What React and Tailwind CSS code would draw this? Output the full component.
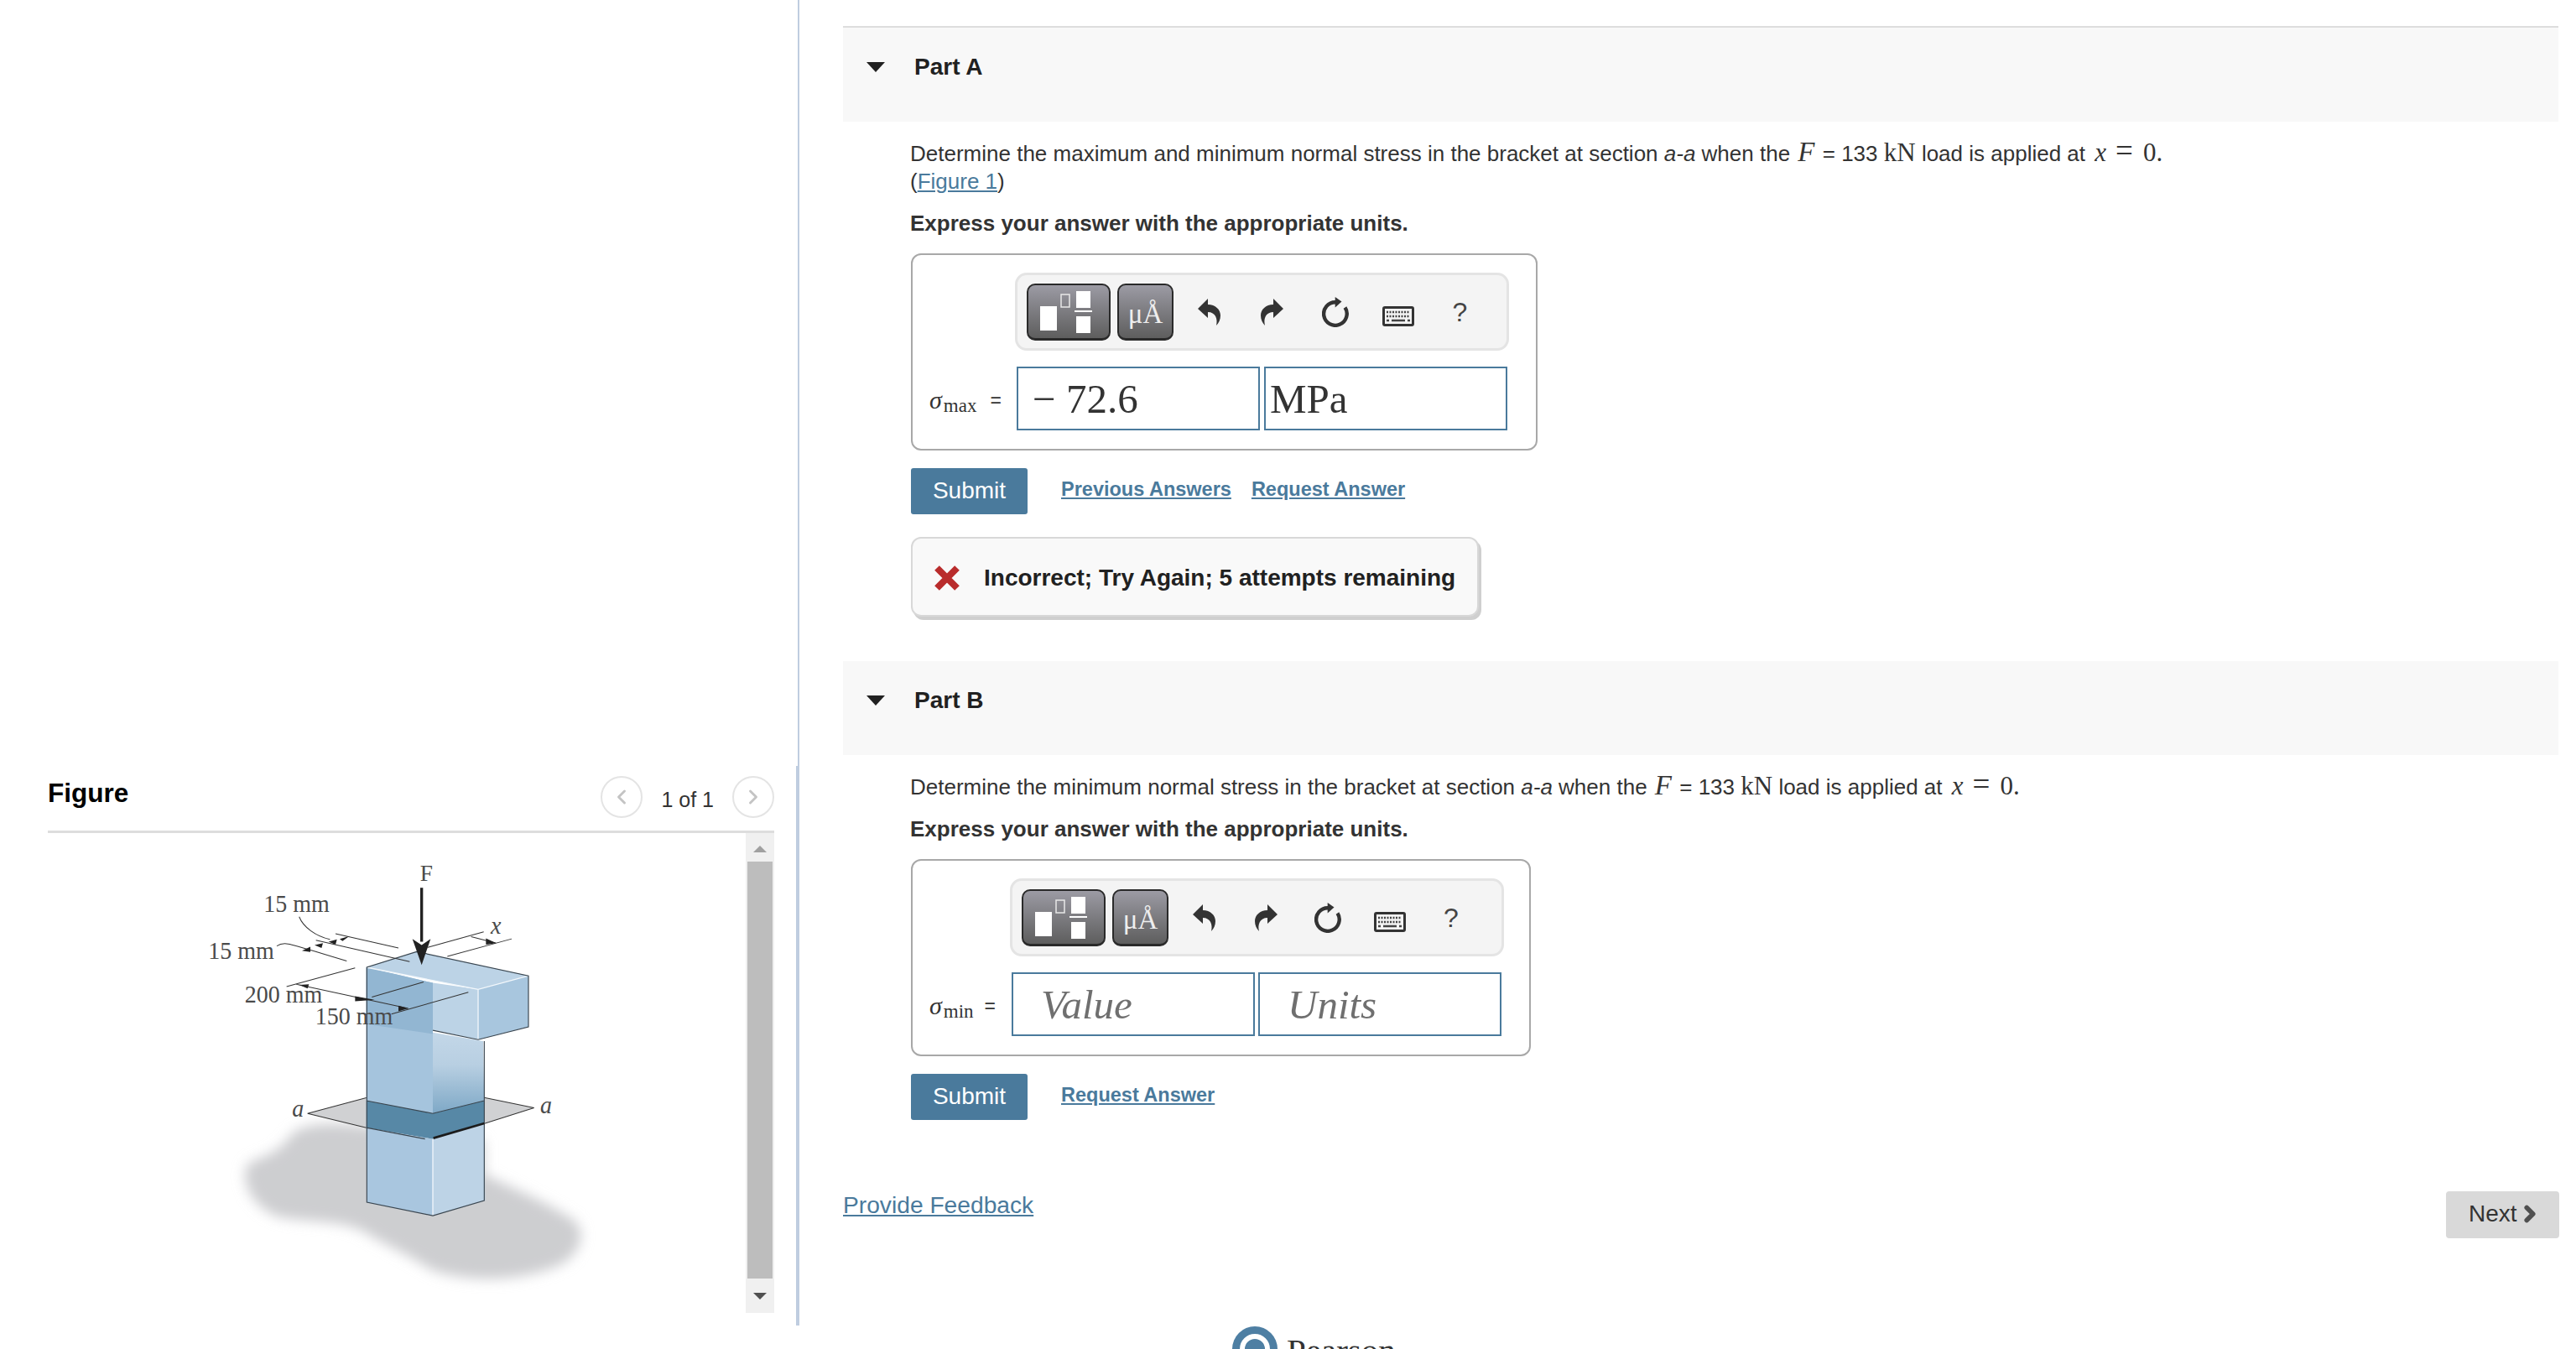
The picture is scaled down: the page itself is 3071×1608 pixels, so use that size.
import React from 'react';
import { ChevronLeft, ChevronRight } from 'lucide-react';

function Undo({ flip }) {
    return (
        <svg width="27" height="32" viewBox="0 0 27 32" className={flip ? '-scale-x-100' : ''}>
            <path d="M0 12 L12 0 L12 7 C21 7 27 13 27 20 C27 25 25 29 22 32 C24 24 21 16 12 16 L12 23 Z" fill="#333" />
        </svg>
    );
}

function Reset() {
    return (
        <svg width="32" height="36" viewBox="0 0 32 36">
            <path d="M16 6.2 A13.8 13.8 0 1 0 27.5 12.5" fill="none" stroke="#333" strokeWidth="4.4" />
            <path d="M15.7 0 L23.5 5.5 L15.7 12.5 Z" fill="#333" />
        </svg>
    );
}

function Keyboard() {
    return (
        <svg width="38" height="24" viewBox="0 0 38 24">
            <rect x="1.5" y="1.5" width="35" height="21" rx="1.5" fill="#f4f4f4" stroke="#333" strokeWidth="3" />
            <path d="M5 7 H33" stroke="#444" strokeWidth="2.5" strokeDasharray="2 1.5" />
            <path d="M5 12 H33" stroke="#444" strokeWidth="2.5" strokeDasharray="2 1.5" />
            <path d="M5 17 H8 M11 17 H27 M30 17 H33" stroke="#444" strokeWidth="2.5" />
        </svg>
    );
}

function Triangle() {
    return (
        <svg width="22" height="12" viewBox="0 0 22 12" className="mt-[9px]">
            <path d="M0 0 H22 L11 12 Z" fill="#212121" />
        </svg>
    );
}

function PartHeader({ name, heightClass, topBorder }) {
    return (
        <div className={`flex bg-[#f8f8f8] pl-[28px] pt-[32px] ${heightClass} ${topBorder ? 'border-t-2 border-[#dddddd]' : ''}`}>
            <Triangle />
            <span className="ml-[35px] text-[28px] leading-[30px] font-bold text-[#212121]">{name}</span>
        </div>
    );
}

function Toolbar({ marginClass, cellClass }) {
    return (
        <div className={`flex items-center w-[589px] h-[93px] bg-[#f4f4f4] border-[3px] border-[#e4e4e4] rounded-[14px] pl-[11px] ${marginClass}`}>
            <div className="w-[100px] h-[68px] rounded-[10px] border-2 border-b-[3px] border-[#2a2a2a] bg-gradient-to-b from-[#9c9ba4] to-[#5e5e5e] shrink-0">
                <svg width="96" height="63" viewBox="0 0 96 63">
                    <rect x="14" y="25" width="20" height="29" fill="#fff" />
                    <rect x="39" y="11" width="10" height="15" fill="none" stroke="#e8e8e8" strokeWidth="1.5" />
                    <rect x="57" y="7" width="17" height="20" fill="#fff" />
                    <rect x="55" y="30" width="21" height="2" fill="#fff" />
                    <rect x="57" y="37" width="17" height="20" fill="#fff" />
                </svg>
            </div>
            <div className="ml-[8px] w-[67px] h-[68px] rounded-[10px] border-2 border-b-[3px] border-[#2a2a2a] bg-gradient-to-b from-[#9c9ba4] to-[#5e5e5e] shrink-0 flex items-center justify-center pt-[8px] font-['Liberation_Serif',serif] text-[33px] text-[#eeeeee]">
                μÅ
            </div>
            <div className={`ml-[5px] flex justify-center ${cellClass}`}><Undo /></div>
            <div className={`flex justify-center ${cellClass}`}><Undo flip /></div>
            <div className={`flex justify-center ${cellClass}`}><Reset /></div>
            <div className={`flex justify-center pt-[10px] ${cellClass}`}><Keyboard /></div>
            <div className={`flex justify-center text-[32px] leading-none text-[#444444] -ml-[1px] ${cellClass}`}>?</div>
        </div>
    );
}

function Answer({ sub, widthClass, marginClass, labelClass, cellClass, gapClass, eqClass, value, units }) {
    const placeholder = 'italic text-[#6f6f6f] pl-[33px]';
    return (
        <div className={`${widthClass} border-2 border-[#a8a8a8] rounded-[12px] pt-[21px] pb-[22px]`}>
            <Toolbar marginClass={marginClass} cellClass={cellClass} />
            <div className="flex items-center mt-[19px]">
                <div className={`${labelClass} pl-[20px] pt-[2px] flex items-baseline text-[#333333] shrink-0`}>
                    <span className="font-['Liberation_Serif',serif] italic text-[30px]">σ</span>
                    <span className="ml-[2px] font-['Liberation_Serif',serif] text-[23px] relative top-[4px]">{sub}</span>
                    <span className={`${eqClass} text-[23px] relative -top-[2px]`}>=</span>
                </div>
                <div className={`flex ${gapClass} font-['Liberation_Serif',serif] text-[49px] text-[#333333]`}>
                    <div className={`w-[290px] h-[76px] border-2 border-[#4a7a9c] flex items-center leading-none ${value ? 'pl-[17px]' : placeholder}`}>
                        {value || 'Value'}
                    </div>
                    <div className={`w-[290px] h-[76px] border-2 border-[#4a7a9c] flex items-center leading-none ${units ? 'pl-[5px]' : placeholder}`}>
                        {units || 'Units'}
                    </div>
                </div>
            </div>
        </div>
    );
}

function Actions({ previous }) {
    const link = 'text-[23.5px] font-bold text-[#4a7a9c] underline pb-[3px]';
    return (
        <div className="flex items-center mt-[21px]">
            <button className="w-[139px] h-[55px] bg-[#4a7a9c] rounded-[3px] text-white text-[28px] pb-[2px]">Submit</button>
            {previous && <a className={`ml-[40px] ${link}`}>Previous Answers</a>}
            <a className={`${previous ? 'ml-[24px]' : 'ml-[40px]'} ${link}`}>Request Answer</a>
        </div>
    );
}

function Formula() {
    const math = "font-['Liberation_Serif',serif] text-[31px]";
    return (
        <>
            {' '}when the <span className={`${math} italic text-[33px] mx-[2px]`}>F</span> = 133{' '}
            <span className={math}>kN</span> load is applied at{' '}
            <span className={`${math} italic ml-[4px] mr-[11px]`}>x</span>
            <span className={`${math} text-[37px] leading-[20px] mr-[12px]`}>=</span>
            <span className={math}>0.</span>
        </>
    );
}

function BracketFigure() {
    const thin = { stroke: '#333', strokeWidth: 3, fill: 'none' };
    return (
        <svg width="500" height="538" viewBox="0 0 1500 1590" preserveAspectRatio="none" className="ml-[163px] mt-[28px] shrink-0">
            <defs>
                <filter id="blur" x="-20%" y="-20%" width="140%" height="140%">
                    <feGaussianBlur stdDeviation="22" />
                </filter>
                <linearGradient id="side" x1="0" y1="0" x2="0" y2="1">
                    <stop offset="0" stopColor="#c3d7e8" />
                    <stop offset="0.4" stopColor="#b8cfe2" />
                    <stop offset="1" stopColor="#7ea8c6" />
                </linearGradient>
            </defs>
            <path d="M385 975 C340 1050 260 1060 225 1085 C195 1150 250 1240 340 1270 C450 1290 560 1280 640 1320 C720 1370 800 1400 880 1455 C1000 1500 1200 1500 1340 1440 C1420 1400 1440 1320 1390 1280 C1300 1220 1180 1170 1070 1120 L1070 1000 L650 950 C560 940 450 930 385 975 Z" fill="#cdced0" filter="url(#blur)" />
            <path d="M440 905 L650 850 L1075 850 L1250 885 L1075 940 L650 955 Z" fill="#d0d1d3" stroke="#333" strokeWidth="3" />
            <path d="M650 390 L888 445 L888 905 L650 860 Z" fill="#a5c4dd" />
            <path d="M650 390 L888 445 L888 625 L650 590 Z" fill="#92b6d2" />
            <path d="M888 620 L1068 650 L1072 860 L888 905 Z" fill="url(#side)" />
            <path d="M650 860 L888 905 L888 995 L650 955 Z" fill="#5788a6" />
            <path d="M888 905 L1072 860 L1072 940 L888 995 Z" fill="#5788a6" />
            <path d="M650 955 L888 995 L888 1265 L652 1218 Z" fill="#a9c6df" />
            <path d="M888 995 L1072 940 L1075 1212 L888 1265 Z" fill="#bdd3e6" />
            <path d="M650 390 L830 335 L1230 420 L1050 468 Z" fill="#bcd3e6" />
            <path d="M888 445 L1050 468 L1050 645 L888 610 Z" fill="#bcd3e6" />
            <path d="M1050 468 L1230 420 L1230 600 L1050 645 Z" fill="#a8c6de" />
            <path d="M650 390 L1050 468 L1230 420 M1050 468 V645 M888 995 V1265" fill="none" stroke="#f2f7fb" strokeWidth="4" />
            <path d="M650 860 L888 905 L1072 860 M650 955 L860 995 M1072 650 V1212 L888 1265 L652 1218 V390 L830 335 L1230 420 V600 L1050 645 L888 612" fill="none" stroke="#3a4650" strokeWidth="3.5" />
            <path d="M890 992 L1072 940" stroke="#1c1c1c" strokeWidth="8" />
            <path d="M330 315 C360 295 380 310 580 368 M540 272 L765 322 M470 295 L805 370 M410 212 C425 250 470 280 520 292" {...thin} />
            <path d="M365 458 L610 392 M400 450 L800 535 M670 495 L855 442 M740 555 L1015 478 M870 320 L1070 265 M940 352 L1170 290 M1025 282 L1115 305" {...thin} />
            <path d="M420 332 L450 318 L450 336 Z M465 312 L495 305 L490 322 Z M515 300 L545 292 L540 310 Z M555 290 L590 280 L565 298 Z M410 452 L445 450 L440 465 Z M610 492 L680 505 L610 510 Z M765 525 L800 535 L765 545 Z M1078 288 L1115 305 L1078 310 Z" fill="#222" />
            <rect x="843" y="110" width="10" height="190" fill="#222" />
            <path d="M815 290 L848 312 L880 290 L848 382 Z" fill="#222" />
            <g fontFamily="'Liberation Serif', serif" fill="#4a4a4a">
                <text x="865" y="85" fontSize="82" textAnchor="middle">F</text>
                <text x="283" y="195" fontSize="84">15 mm</text>
                <text x="85" y="360" fontSize="84">15 mm</text>
                <text x="215" y="515" fontSize="84">200 mm</text>
                <text x="467" y="592" fontSize="84">150 mm</text>
                <text x="1095" y="272" fontSize="84" fontStyle="italic">x</text>
                <text x="385" y="915" fontSize="84" fontStyle="italic">a</text>
                <text x="1272" y="905" fontSize="84" fontStyle="italic">a</text>
            </g>
        </svg>
    );
}

function FigurePanel() {
    const circle = 'w-[50px] h-[50px] rounded-full border-2 border-[#e4e4e4] flex items-center justify-center text-[#c4c4c4]';
    return (
        <div className="w-[953px] shrink-0">
            <div className="h-[913px] border-r-2 border-[#bfcde0]" />
            <div className="h-[667px] border-r-4 border-[#bfcde0] pl-[57px] pr-[26px]">
                <div className="flex items-start h-[80px] pt-[12px] border-b-[3px] border-[#dddddd]">
                    <span className="text-[31.5px] font-bold leading-[40px] text-black">Figure</span>
                    <div className="ml-auto flex items-center">
                        <div className={circle}><ChevronLeft size={28} strokeWidth={2.5} /></div>
                        <span className="mx-[22px] text-[25px] text-[#333333] pt-[7px]">1 of 1</span>
                        <div className={circle}><ChevronRight size={28} strokeWidth={2.5} /></div>
                    </div>
                </div>
                <div className="flex h-[572px]">
                    <BracketFigure />
                    <div className="ml-auto w-[34px] h-[572px] bg-[#f0f0f0] flex flex-col items-center shrink-0">
                        <svg width="16" height="8" viewBox="0 0 16 8" className="mt-[15px] shrink-0"><path d="M0 8 L8 0 L16 8 Z" fill="#a0a0a0" /></svg>
                        <div className="w-[30px] h-[497px] bg-[#bdbdbd] mt-[11px] shrink-0" />
                        <svg width="16" height="8" viewBox="0 0 16 8" className="mt-[17px] shrink-0"><path d="M0 0 L16 0 L8 8 Z" fill="#505050" /></svg>
                    </div>
                </div>
            </div>
        </div>
    );
}

export default function App() {
    const para = 'ml-[80px] text-[26px] leading-[33px] text-[#333333] whitespace-nowrap';
    const express = 'ml-[80px] mt-[18px] text-[26px] leading-[33px] font-bold text-[#333333]';
    return (
        <div className="flex h-[1608px] w-[3071px] overflow-hidden bg-white font-['Liberation_Sans',Arial,sans-serif]">
            <FigurePanel />
            <div className="ml-[52px] w-[2045px] pt-[31px] shrink-0">
                <PartHeader name="Part A" heightClass="h-[114px]" topBorder />
                <p className={`${para} mt-[20px] h-[67px]`}>
                    Determine the maximum and minimum normal stress in the bracket at section <i>a-a</i>
                    <Formula />
                    <br />
                    (<a className="text-[#4a7a9c] underline">Figure 1</a>)
                </p>
                <p className={express}>Express your answer with the appropriate units.</p>
                <div className="ml-[81px] mt-[19px]">
                    <Answer sub="max" widthClass="w-[747px]" marginClass="ml-[122px]" labelClass="w-[124px]" cellClass="w-[75px]" gapClass="gap-[5px]" eqClass="ml-[16px]" value="− 72.6" units="MPa" />
                    <Actions previous />
                    <div className="flex items-center mt-[27px] w-[677px] h-[95px] bg-[#f9f9f9] border-2 border-[#d8d8d8] rounded-[12px] shadow-[3px_4px_0_#cfcfcf] pl-[26px]">
                        <svg width="30" height="30" viewBox="0 0 30 30" className="shrink-0 mt-[2px]">
                            <path d="M3 3 L27 27 M27 3 L3 27" stroke="#b92c2c" strokeWidth="8" />
                        </svg>
                        <span className="ml-[29px] pt-[3px] text-[28px] font-bold text-[#212121] whitespace-nowrap">Incorrect; Try Again; 5 attempts remaining</span>
                    </div>
                </div>
                <div className="mt-[53px]">
                    <PartHeader name="Part B" heightClass="h-[112px]" />
                </div>
                <p className={`${para} mt-[20px] h-[34px]`}>
                    Determine the minimum normal stress in the bracket at section <i>a-a</i>
                    <Formula />
                </p>
                <p className={express}>Express your answer with the appropriate units.</p>
                <div className="ml-[81px] mt-[19px]">
                    <Answer sub="min" widthClass="w-[739px]" marginClass="ml-[116px]" labelClass="w-[118px]" cellClass="w-[74px]" gapClass="gap-[4px]" eqClass="ml-[13px]" />
                    <Actions />
                </div>
                <div className="flex justify-between items-start mt-[85px]">
                    <a className="text-[28.2px] leading-[32px] text-[#4a7a9c] underline">Provide Feedback</a>
                    <button className="flex items-center w-[135px] h-[56px] -mr-[1px] bg-[#d9d9d9] rounded-[4px] pl-[27px] pb-[2px] text-[28px] text-[#333333]">
                        Next
                        <ChevronRight size={30} strokeWidth={4.5} className="text-[#505050]" />
                    </button>
                </div>
                <div className="flex items-start ml-[463px] mt-[104px]">
                    <svg width="56" height="56" viewBox="0 0 56 56" className="shrink-0">
                        <circle cx="28" cy="28" r="27" fill="#4e7fa3" />
                        <circle cx="28" cy="28" r="15" fill="none" stroke="#fff" strokeWidth="6" />
                    </svg>
                    <span className="ml-[10px] mt-[7px] font-['Liberation_Serif',serif] text-[41px] leading-[46px] text-[#333333]">Pearson</span>
                </div>
            </div>
        </div>
    );
}
